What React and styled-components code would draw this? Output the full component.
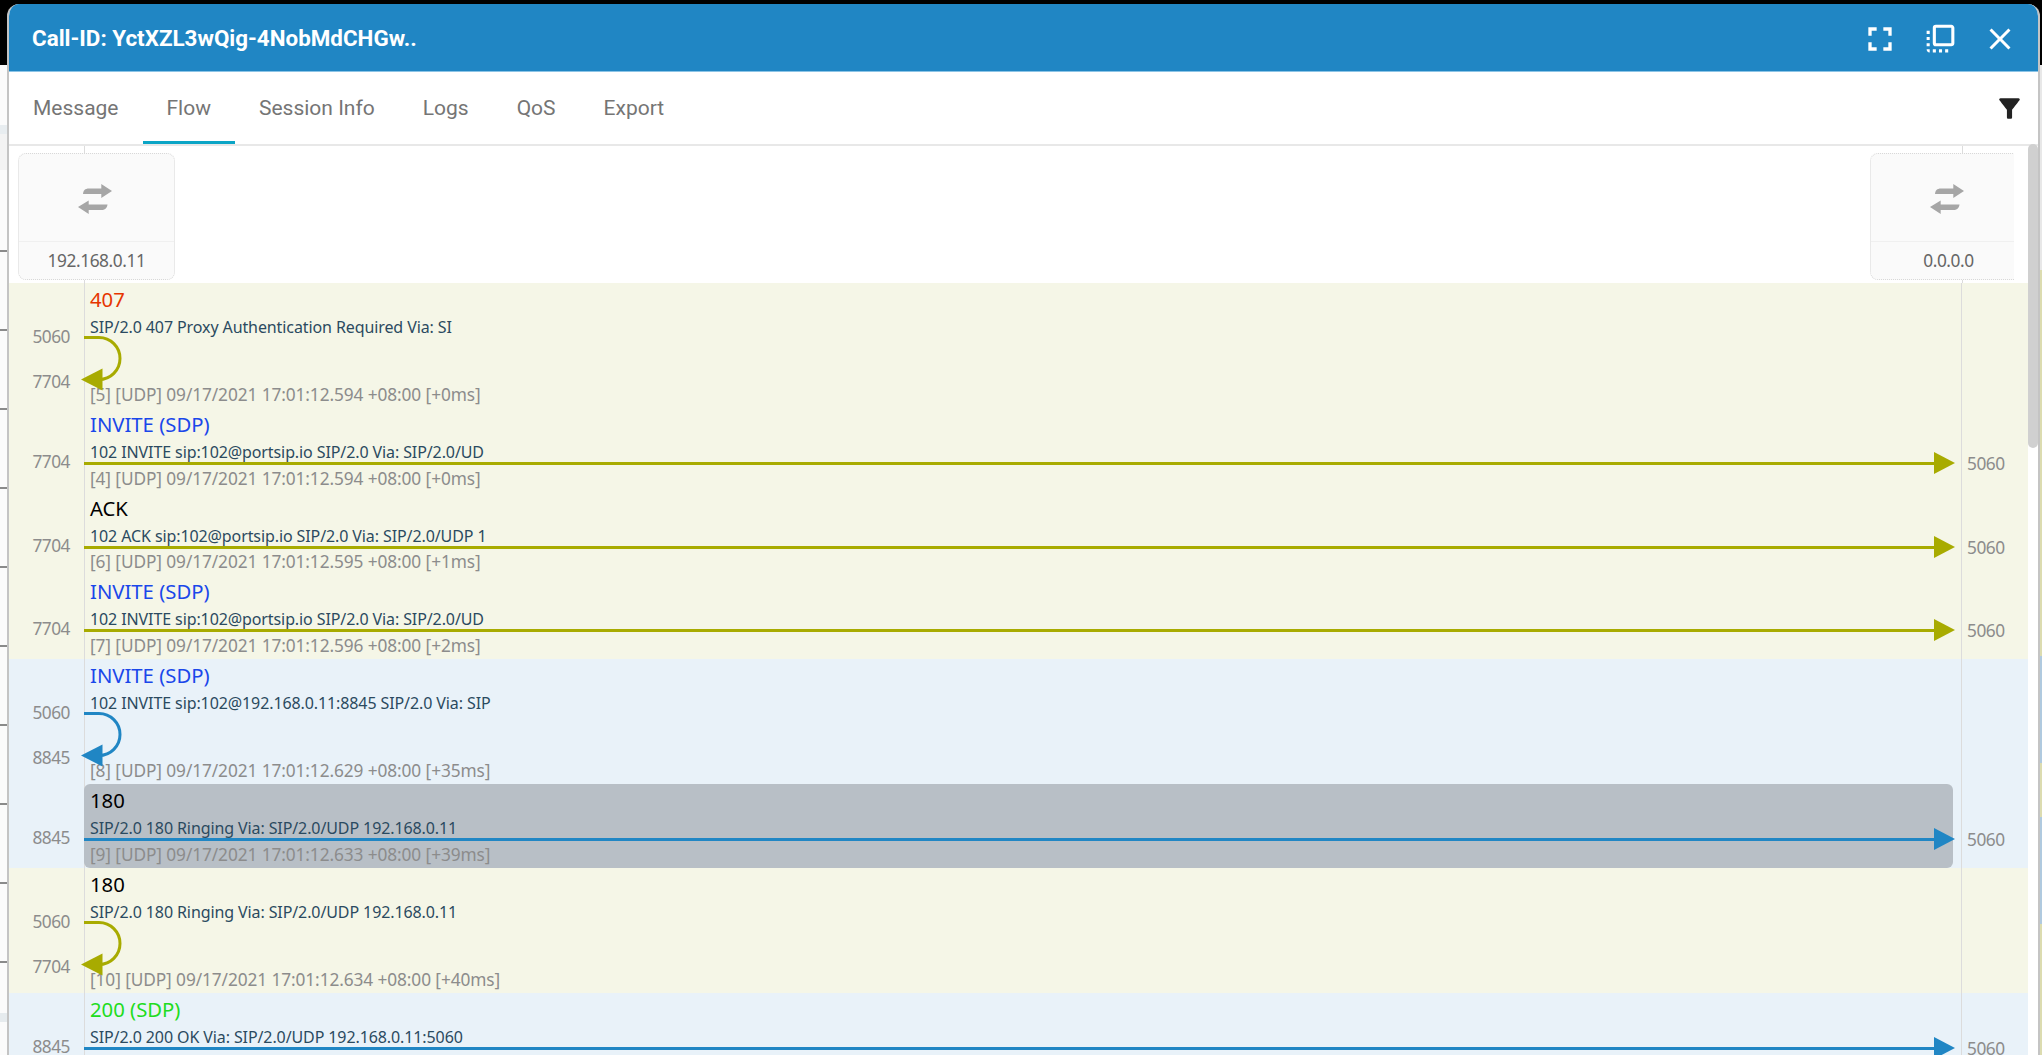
import styled, { createGlobalStyle } from 'styled-components';
import { MdClose, MdFilterAlt, MdFlipToFront, MdFullscreen } from 'react-icons/md';

const OLIVE = '#a8ab00';
const BLUE = '#2086c4';

const messages = [
  { id: 1, tone: 'beige', loop: true, color: OLIVE, from: '5060', to: '7704', method: '407', methodColor: '#e63500', text: 'SIP/2.0 407 Proxy Authentication Required Via: SI', meta: '[5] [UDP] 09/17/2021 17:01:12.594 +08:00 [+0ms]' },
  { id: 2, tone: 'beige', color: OLIVE, from: '7704', to: '5060', method: 'INVITE (SDP)', methodColor: '#1a47ea', text: '102 INVITE sip:102@portsip.io SIP/2.0 Via: SIP/2.0/UD', meta: '[4] [UDP] 09/17/2021 17:01:12.594 +08:00 [+0ms]' },
  { id: 3, tone: 'beige', color: OLIVE, from: '7704', to: '5060', method: 'ACK', methodColor: '#000', text: '102 ACK sip:102@portsip.io SIP/2.0 Via: SIP/2.0/UDP 1', meta: '[6] [UDP] 09/17/2021 17:01:12.595 +08:00 [+1ms]' },
  { id: 4, tone: 'beige', color: OLIVE, from: '7704', to: '5060', method: 'INVITE (SDP)', methodColor: '#1a47ea', text: '102 INVITE sip:102@portsip.io SIP/2.0 Via: SIP/2.0/UD', meta: '[7] [UDP] 09/17/2021 17:01:12.596 +08:00 [+2ms]' },
  { id: 5, tone: 'blue', loop: true, color: BLUE, from: '5060', to: '8845', method: 'INVITE (SDP)', methodColor: '#1a47ea', text: '102 INVITE sip:102@192.168.0.11:8845 SIP/2.0 Via: SIP', meta: '[8] [UDP] 09/17/2021 17:01:12.629 +08:00 [+35ms]' },
  { id: 6, tone: 'blue', selected: true, color: BLUE, from: '8845', to: '5060', method: '180', methodColor: '#000', text: 'SIP/2.0 180 Ringing Via: SIP/2.0/UDP 192.168.0.11', meta: '[9] [UDP] 09/17/2021 17:01:12.633 +08:00 [+39ms]' },
  { id: 7, tone: 'beige', loop: true, color: OLIVE, from: '5060', to: '7704', method: '180', methodColor: '#000', text: 'SIP/2.0 180 Ringing Via: SIP/2.0/UDP 192.168.0.11', meta: '[10] [UDP] 09/17/2021 17:01:12.634 +08:00 [+40ms]' },
  { id: 8, tone: 'blue', color: BLUE, from: '8845', to: '5060', method: '200 (SDP)', methodColor: '#20dc20', text: 'SIP/2.0 200 OK Via: SIP/2.0/UDP 192.168.0.11:5060', meta: '' },
];

const tabs = ['Message', 'Flow', 'Session Info', 'Logs', 'QoS', 'Export'];

function ExchangeIcon() {
  return (
    <svg width="34" height="30" viewBox="0 0 34 30" fill="currentColor">
      <path d="M5 10.5C5 6.5 7 4.5 11 4.5H23.3V0L34 7L23.3 14V10H5Z" />
      <path d="M29.5 19.5C29.5 23.5 27.5 26 23.5 26H10.7V30L0 23L10.7 16.5V20.5H29.5Z" />
    </svg>
  );
}

export default function App() {
  return (
    <Page>
      <GlobalStyle />
      <LeftEdge />
      <Dialog>
        <Header>
          <Title>Call-ID: YctXZL3wQig-4NobMdCHGw..</Title>
          <HeaderIcons>
            <HeaderButton><MdFullscreen size={40} /></HeaderButton>
            <HeaderButton><MdFlipToFront size={37} /></HeaderButton>
            <HeaderButton><MdClose size={36} /></HeaderButton>
          </HeaderIcons>
        </Header>
        <TabBar>
          {tabs.map((tab) => (
            <Tab key={tab} $active={tab === 'Flow'}>{tab}</Tab>
          ))}
          <FilterButton><MdFilterAlt size={31} /></FilterButton>
        </TabBar>
        <Body>
          <FlowPane>
            <Hosts>
              <HostsClip>
                <HostCard>
                  <HostIcon><ExchangeIcon /></HostIcon>
                  <HostLabel>192.168.0.11</HostLabel>
                </HostCard>
                <HostCard $clipped>
                  <HostIcon><ExchangeIcon /></HostIcon>
                  <HostLabel>0.0.0.0</HostLabel>
                </HostCard>
              </HostsClip>
            </Hosts>
            {messages.map((m) => (
              <Row key={m.id} $tone={m.tone} $loop={m.loop}>
                <PortsLeft>
                  <Port>{m.from}</Port>
                  {m.loop && <Port>{m.to}</Port>}
                </PortsLeft>
                <Lane>
                  <Message $selected={m.selected}>
                    <Method $color={m.methodColor}>{m.method}</Method>
                    <Summary>{m.text}</Summary>
                    <Meta>{m.meta}</Meta>
                  </Message>
                  {m.loop ? (
                    <LoopArrow width="46" height="112" viewBox="0 0 46 112">
                      <path d="M4 54.5H19A21 21 0 0 1 19 96.5" fill="none" stroke={m.color} strokeWidth="3" />
                      <polygon points="1,96.5 22.5,85.5 22.5,107.5" fill={m.color} />
                    </LoopArrow>
                  ) : (
                    <StraightArrow $color={m.color} />
                  )}
                </Lane>
                <PortsRight>
                  {!m.loop && <Port>{m.to}</Port>}
                </PortsRight>
              </Row>
            ))}
          </FlowPane>
          <ScrollTrack>
            <ScrollThumb />
          </ScrollTrack>
        </Body>
      </Dialog>
      <RightEdge />
    </Page>
  );
}

const GlobalStyle = createGlobalStyle`
  html, body {
    margin: 0;
    padding: 0;
    height: 100%;
    overflow: hidden;
    background: #fff;
  }
  * {
    box-sizing: border-box;
  }
`;

const Page = styled.div`
  display: flex;
  width: 2042px;
  height: 1055px;
  overflow: hidden;
  background: linear-gradient(#000 0 65px, #fff 65px);
  font-family: "Noto Sans", "Open Sans", sans-serif;
`;

const LeftEdge = styled.div`
  width: 7px;
  flex: none;
  background:
    repeating-linear-gradient(transparent 0 7px, #8a8a8a 7px 9px, transparent 9px 79px) 0 243px / 100% 760px no-repeat,
    linear-gradient(#e6ebee, #e6ebee) 0 1013px / 100% 9px no-repeat,
    linear-gradient(#e8edf0, #e8edf0) 0 125px / 100% 9px no-repeat,
    linear-gradient(#f3f3f3, #f3f3f3) 0 134px / 100% 36px no-repeat,
    linear-gradient(#000, #000) 0 0 / 100% 65px no-repeat,
    #fbfbfb;
`;

const RightEdge = styled.div`
  width: 2px;
  flex: none;
  background: linear-gradient(
    #000 0 65px,
    #e8e8e8 65px 270px,
    #dcdcb0 270px 656px,
    #b0cadf 656px 763px,
    #dcdcb0 763px 817px,
    #b0cadf 817px 924px,
    #dcdcb0 924px
  );
`;

const Dialog = styled.div`
  width: 2033px;
  flex: none;
  margin-top: 4px;
  display: flex;
  flex-direction: column;
  border-radius: 12px 12px 0 0;
  border-left: 2px solid #c4c4c4;
  border-right: 2px solid #c4c4c4;
  background: #fff;
  overflow: hidden;
`;

const Header = styled.header`
  height: 68px;
  flex: none;
  display: flex;
  align-items: center;
  justify-content: space-between;
  padding: 2px 0 0 23px;
  background: #2086c4;
  border-bottom: 1px solid #8cc4e6;
  color: #fff;
`;

const Title = styled.h1`
  margin: 0 0 2px;
  font-family: Roboto, sans-serif;
  font-size: 22.4px;
  font-weight: 700;
`;

const HeaderIcons = styled.div`
  display: flex;
  align-items: center;
  padding-right: 8px;
`;

const HeaderButton = styled.span`
  width: 60px;
  display: flex;
  justify-content: center;
  align-items: center;
`;

const TabBar = styled.nav`
  height: 74px;
  flex: none;
  display: flex;
  border-bottom: 2px solid #e8e8e8;
`;

const Tab = styled.div`
  height: 72px;
  padding: 3px 24px 0;
  display: flex;
  align-items: center;
  font-family: Roboto, sans-serif;
  font-size: 21px;
  color: #757575;
  border-bottom: 3px solid ${(p) => (p.$active ? '#0ba5c6' : 'transparent')};
`;

const FilterButton = styled.span`
  margin-left: auto;
  padding: 21px 13px 0 0;
  color: #222;
`;

const Body = styled.div`
  flex: 1;
  min-height: 0;
  display: flex;
`;

const FlowPane = styled.div`
  flex: 1;
  min-width: 0;
  overflow: hidden;
`;

const Hosts = styled.div`
  position: relative;
  height: 137px;
  padding: 7px 14px 0 0;

  &::before,
  &::after {
    content: '';
    position: absolute;
    top: 0;
    bottom: 0;
    width: 1px;
    background: #dcdcdc;
  }
  &::before {
    left: 75px;
  }
  &::after {
    left: 1953px;
  }
`;

const HostsClip = styled.div`
  position: relative;
  z-index: 1;
  display: flex;
  justify-content: space-between;
  overflow: hidden;
  padding-left: 9px;
`;

const HostCard = styled.div`
  width: 157px;
  height: 127px;
  display: flex;
  flex-direction: column;
  background: #fafafa;
  border: 1px dotted #d8d8d8;
  border-radius: 8px;
  margin-right: ${(p) => (p.$clipped ? '-13px' : '0')};
`;

const HostIcon = styled.div`
  height: 88px;
  flex: none;
  display: flex;
  align-items: center;
  justify-content: center;
  padding: 2px 3px 0 0;
  color: #a6a6a6;
  border-bottom: 1px solid #f0f0f0;
`;

const HostLabel = styled.div`
  flex: 1;
  display: flex;
  align-items: center;
  justify-content: center;
  font-size: 17.3px;
  letter-spacing: -0.4px;
  color: #666;
`;

const Row = styled.div`
  height: ${(p) => (p.$loop ? '125px' : '83.67px')};
  display: grid;
  grid-template-columns: 75px 1fr 66px;
  background: ${(p) => (p.$tone === 'blue' ? '#e9f2f9' : '#f5f6e7')};
`;

const PortsLeft = styled.div`
  display: flex;
  flex-direction: column;
  align-items: flex-end;
  gap: 21px;
  padding: 42px 14px 0 0;
`;

const PortsRight = styled.div`
  padding: 44px 0 0 5px;
`;

const Port = styled.div`
  height: 24px;
  line-height: 24px;
  font-size: 17.3px;
  letter-spacing: -0.5px;
  color: #8c8c8c;
`;

const Lane = styled.div`
  position: relative;
  border-left: 1px solid #dcdcdc;
  border-right: 1px solid #dcdcdc;
`;

const Message = styled.div`
  height: 100%;
  margin: 0 8px 0 -1px;
  padding-left: 6px;
  display: flex;
  flex-direction: column;
  border-radius: 6px;
  background: ${(p) => (p.$selected ? '#b8bfc6' : 'transparent')};
`;

const Method = styled.div`
  height: 32px;
  line-height: 32px;
  font-size: 20.3px;
  color: ${(p) => p.$color};
`;

const Summary = styled.div`
  height: 24px;
  line-height: 24px;
  font-size: 16px;
  letter-spacing: -0.1px;
  white-space: nowrap;
  color: #2b4a60;
`;

const Meta = styled.div`
  margin-top: auto;
  margin-bottom: 1px;
  height: 24px;
  line-height: 24px;
  font-size: 17.3px;
  letter-spacing: -0.1px;
  white-space: nowrap;
  color: #8c8c8c;
`;

const LoopArrow = styled.svg`
  position: absolute;
  left: -5px;
  top: 0;
`;

const StraightArrow = styled.div`
  position: absolute;
  left: -1px;
  right: 27px;
  top: 54px;
  height: 3px;
  background: ${(p) => p.$color};

  &::after {
    content: '';
    position: absolute;
    right: -21px;
    top: -10px;
    border-style: solid;
    border-width: 11px 0 11px 21px;
    border-color: transparent transparent transparent ${(p) => p.$color};
  }
`;

const ScrollTrack = styled.div`
  width: 10px;
  flex: none;
  background: #fff;
`;

const ScrollThumb = styled.div`
  height: 304px;
  margin-top: -2px;
  border-radius: 5px;
  background: #d0d0d0;
`;
